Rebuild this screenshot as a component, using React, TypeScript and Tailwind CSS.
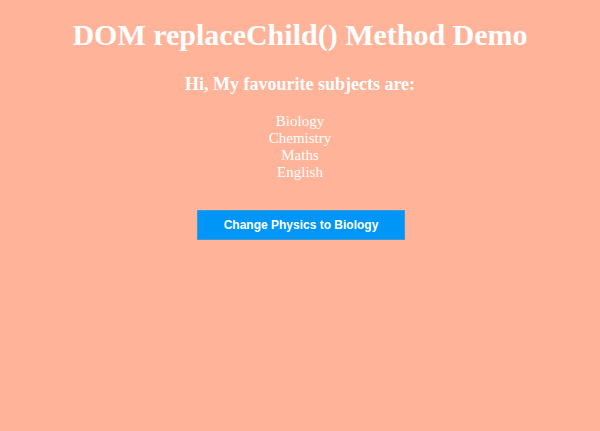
export default function App() {
  return (
    <div className="min-h-[431px] w-full bg-[#ffb399] text-center text-white" style={{ fontFamily: '"Liberation Serif", "Times New Roman", serif' }}>
      <div className="pt-[17px]">
        <h1 className="text-[30px] font-bold leading-[35px]">DOM replaceChild() Method Demo</h1>
        <h3 className="mt-[21px] text-[18px] font-bold leading-[22px]">Hi, My favourite subjects are:</h3>
        <ul className="mt-[18px] flex flex-col text-[15px] leading-[17px]">
          <li>Biology</li>
          <li>Chemistry</li>
          <li>Maths</li>
          <li>English</li>
        </ul>
        <div className="mt-[29px] flex justify-center pl-[2px]">
          <button
            className="h-[30px] w-[208px] border border-[#3a9ad9] bg-[#0096f7] text-[12px] font-bold text-white"
            style={{ fontFamily: '"Liberation Sans", Arial, sans-serif' }}
          >
            Change Physics to Biology
          </button>
        </div>
      </div>
    </div>
  );
}
